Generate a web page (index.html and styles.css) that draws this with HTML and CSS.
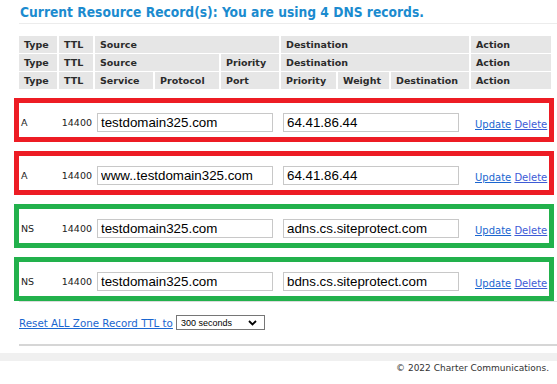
FILE: index.html
```html
<!DOCTYPE html>
<html>
  <head>
    <title>DNS Records</title>
    <link rel="stylesheet" href="styles.css">
  </head>
  <body>
    <div class="page">
      <h2 class="title">Current Resource Record(s): You are using 4 DNS records.</h2>

      <!-- column headers for the three record layouts -->
      <div class="head-grid">
        <div class="th">Type</div>
        <div class="th">TTL</div>
        <div class="th span3">Source</div>
        <div class="th span3">Destination</div>
        <div class="th">Action</div>

        <div class="th">Type</div>
        <div class="th">TTL</div>
        <div class="th span2">Source</div>
        <div class="th">Priority</div>
        <div class="th span3">Destination</div>
        <div class="th">Action</div>

        <div class="th">Type</div>
        <div class="th">TTL</div>
        <div class="th">Service</div>
        <div class="th">Protocol</div>
        <div class="th">Port</div>
        <div class="th">Priority</div>
        <div class="th">Weight</div>
        <div class="th">Destination</div>
        <div class="th">Action</div>
      </div>

      <div class="records">
        <div class="record mark-red">
          <span class="type">A</span>
          <span class="ttl">14400</span>
          <input class="field src" type="text" value="testdomain325.com">
          <input class="field dst" type="text" value="64.41.86.44">
          <span class="actions"><a href="#">Update</a> <a href="#" class="del">Delete</a></span>
        </div>
        <div class="record mark-red">
          <span class="type">A</span>
          <span class="ttl">14400</span>
          <input class="field src" type="text" value="www..testdomain325.com">
          <input class="field dst" type="text" value="64.41.86.44">
          <span class="actions"><a href="#">Update</a> <a href="#" class="del">Delete</a></span>
        </div>
        <div class="record mark-green">
          <span class="type">NS</span>
          <span class="ttl">14400</span>
          <input class="field src" type="text" value="testdomain325.com">
          <input class="field dst" type="text" value="adns.cs.siteprotect.com">
          <span class="actions"><a href="#">Update</a> <a href="#" class="del">Delete</a></span>
        </div>
        <div class="record mark-green">
          <span class="type">NS</span>
          <span class="ttl">14400</span>
          <input class="field src" type="text" value="testdomain325.com">
          <input class="field dst" type="text" value="bdns.cs.siteprotect.com">
          <span class="actions"><a href="#">Update</a> <a href="#" class="del">Delete</a></span>
        </div>
      </div>

      <div class="reset">
        <a href="#">Reset ALL Zone Record TTL to</a>
        <span class="select-wrap">
          <select class="ttl-select">
            <option>300 seconds</option>
            <option>3600 seconds</option>
            <option>14400 seconds</option>
          </select>
          <svg class="chevron" width="9" height="6" viewBox="0 0 9 6"><path d="M1 1 L4.5 4.5 L8 1" fill="none" stroke="#000" stroke-width="1.8"/></svg>
        </span>
      </div>
    </div>

    <div class="band"></div>
    <div class="footer">&copy; 2022 Charter Communications.</div>
  </body>
</html>
```

FILE: styles.css
```css
body {
  margin: 0;
  font-family: "DejaVu Sans", Verdana, sans-serif;
  color: #333;
  background: #fff;
}

.page {
  padding-left: 19px;
}

.title {
  margin: 0;
  padding: 1px 0 0 1px;
  line-height: 22px;
  font-family: "DejaVu Sans Condensed", "DejaVu Sans", sans-serif;
  font-size: 13.7px;
  font-weight: bold;
  color: #1b8bcf;
  border-bottom: 1px solid #ececec;
}

/* header block */
.head-grid {
  margin-top: 12px;
  display: grid;
  grid-template-columns: 38px 34px 58px 64px 58px 55px 51px 78px 80px;
  column-gap: 2px;
  row-gap: 1px;
}

.th {
  background-color: #e6e6e6;
  height: 17px;
  line-height: 17px;
  padding-left: 5px;
  font-size: 9.5px;
  font-weight: bold;
  color: #2b2b2b;
  white-space: nowrap;
}

.span2 { grid-column: span 2; }
.span3 { grid-column: span 3; }

/* record rows */
.records {
  margin-left: -5px;
  width: 540px;
  display: flex;
  flex-direction: column;
  gap: 9px;
  margin-top: 9px;
}

.record {
  display: flex;
  align-items: center;
  padding: 10px 0 5px;
  border: 5px solid;
  font-size: 9.5px;
  color: #222;
}

.mark-red { border-color: #ed1c24; }
.mark-green { border-color: #22b14c; }

.type {
  width: 38px;
  padding-left: 2px;
}

.ttl {
  width: 33px;
  text-align: right;
}

.field {
  box-sizing: border-box;
  width: 176px;
  height: 19px;
  padding: 0 3px;
  border: 1px solid #c8c8c8;
  font-family: "Liberation Sans", Arial, sans-serif;
  font-size: 13.33px;
  color: #000;
  outline: none;
}

.src { margin-left: 5px; }
.dst { margin-left: 10px; }

.actions {
  margin-left: 16px;
  padding-top: 3px;
  font-size: 10px;
  white-space: nowrap;
}

.actions a,
.reset a {
  color: #1a66d0;
}

.actions a.del {
  color: #3d5bd6;
}

/* bottom controls */
.reset {
  padding-top: 13px;
  padding-bottom: 14px;
  border-top: 1px solid #dcdcdc;
  border-bottom: 2px solid #d6d6d6;
  display: flex;
  align-items: center;
  gap: 3px;
  font-size: 10.3px;
}

.select-wrap {
  position: relative;
  display: inline-block;
}

.ttl-select {
  appearance: none;
  box-sizing: border-box;
  width: 89px;
  height: 15px;
  padding: 0 0 0 4px;
  border: 1px solid #767676;
  border-radius: 0;
  background: #fff;
  font-family: "Liberation Sans", Arial, sans-serif;
  font-size: 9px;
  color: #000;
}

.chevron {
  position: absolute;
  right: 8px;
  top: 5px;
}

.band {
  margin-top: 7px;
  height: 8px;
  background-color: #f0f0f0;
}

.footer {
  line-height: 14px;
  font-size: 9px;
  text-align: right;
  padding-right: 8px;
  color: #333;
}
```
